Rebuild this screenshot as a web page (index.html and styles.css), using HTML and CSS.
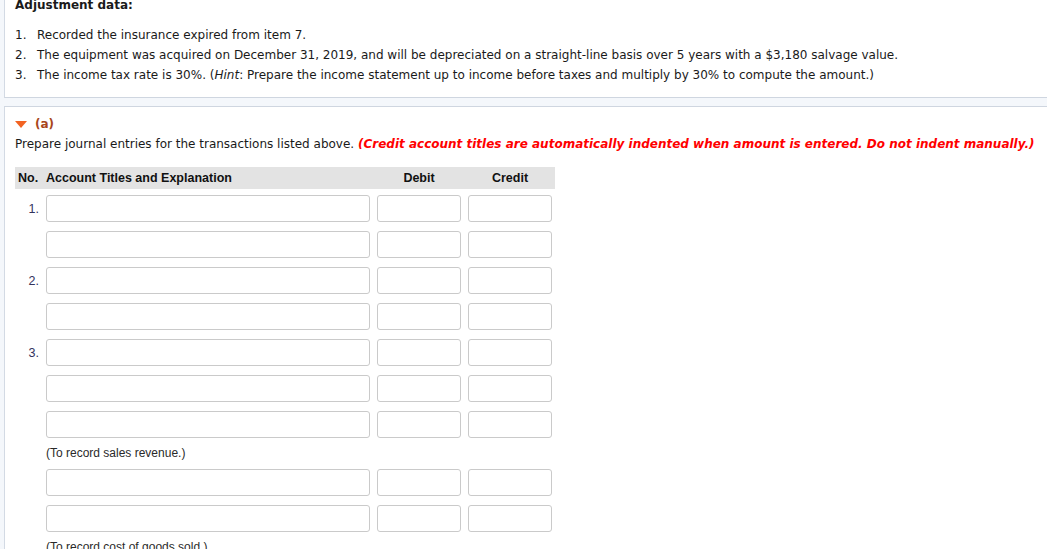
FILE: index.html
```html
<!DOCTYPE html>
<html lang="en">
<head>
    <meta charset="UTF-8">
    <title>Adjustment data</title>
    <link rel="stylesheet" href="styles.css">
</head>
<body>
    <div class="page">
        <div class="data-box">
            <h3 class="data-title">Adjustment data:</h3>
            <ol class="data-list">
                <li><span class="num">1.</span>Recorded the insurance expired from item 7.</li>
                <li><span class="num">2.</span>The equipment was acquired on December 31, 2019, and will be depreciated on a straight-line basis over 5 years with a $3,180 salvage value.</li>
                <li><span class="num">3.</span>The income tax rate is 30%. (<i>Hint</i>: Prepare the income statement up to income before taxes and multiply by 30% to compute the amount.)</li>
            </ol>
        </div>

        <div class="part-box">
            <div class="part-title">
                <svg class="caret" width="12" height="7" viewBox="0 0 12 7"><polygon points="0,0 12,0 6,7" fill="#f26322"/></svg>
                <span>(a)</span>
            </div>
            <p class="part-text">Prepare journal entries for the transactions listed above. <span class="note">(Credit account titles are automatically indented when amount is entered. Do not indent manually.)</span></p>

            <div class="journal">
                <div class="journal-head">
                    <div class="col-no">No.</div>
                    <div>Account Titles and Explanation</div>
                    <div class="col-amt">Debit</div>
                    <div class="col-amt">Credit</div>
                </div>

                <div class="entry-row"><div class="col-no">1.</div><input type="text"><input type="text"><input type="text"></div>
                <div class="entry-row"><div class="col-no"></div><input type="text"><input type="text"><input type="text"></div>
                <div class="entry-row"><div class="col-no">2.</div><input type="text"><input type="text"><input type="text"></div>
                <div class="entry-row"><div class="col-no"></div><input type="text"><input type="text"><input type="text"></div>
                <div class="entry-row"><div class="col-no">3.</div><input type="text"><input type="text"><input type="text"></div>
                <div class="entry-row"><div class="col-no"></div><input type="text"><input type="text"><input type="text"></div>
                <div class="entry-row"><div class="col-no"></div><input type="text"><input type="text"><input type="text"></div>
                <div class="memo">(To record sales revenue.)</div>
                <div class="entry-row"><div class="col-no"></div><input type="text"><input type="text"><input type="text"></div>
                <div class="entry-row"><div class="col-no"></div><input type="text"><input type="text"><input type="text"></div>
                <div class="memo">(To record cost of goods sold.)</div>
            </div>
        </div>
    </div>
</body>
</html>
```

FILE: styles.css
```css
body { margin: 0; background: #f4f7fb; font-family: "DejaVu Sans", Verdana, sans-serif; font-size: 12px; line-height: 20px; color: #1a1a1a; overflow: hidden; }
.page { padding-left: 4px; }

.data-box { background: #fff; border-left: 1px solid #d3dae4; border-bottom: 1px solid #cfd6e0; padding: 0 0 12px 10px; }
.data-title { margin: -5px 0 0; font-size: 12px; line-height: 20px; font-weight: bold; }
.data-list { list-style: none; margin: 10px 0 0; padding: 0; }
.data-list .num { display: inline-block; width: 22px; }

.part-box { margin-top: 8px; background: #fff; border-left: 1px solid #d3dae4; border-top: 1px solid #cfd6e0; padding: 7px 0 40px 10px; }
.part-title { display: flex; align-items: center; gap: 8px; font-weight: bold; color: #a8461c; }
.part-title .caret { margin-top: 1px; }
.part-text { margin: 0; }
.note { color: #f00; font-weight: bold; font-style: italic; }

.journal { margin-top: 13px; width: 540px; font-family: "Liberation Sans", Arial, sans-serif; font-size: 12px; }
.journal-head, .entry-row { display: grid; grid-template-columns: 24px 324px 84px 84px; column-gap: 7px; }
.journal-head { background: #e3e3e3; height: 22px; line-height: 22px; font-size: 12.5px; font-weight: bold; color: #111; margin-bottom: 6px; }
.journal-head .col-no { padding-left: 3px; }
.journal-head .col-amt { text-align: center; }
.entry-row { align-items: center; margin-bottom: 9px; }
.entry-row .col-no { text-align: right; color: #33335c; font-size: 12.5px; line-height: 14px; }
.entry-row input { box-sizing: border-box; height: 27px; margin: 0; border: 1px solid #cacaca; border-radius: 3px; background: #fff; font: inherit; }
.memo { margin: 0 0 9px 31px; line-height: 13px; color: #2a2a2a; }
```
